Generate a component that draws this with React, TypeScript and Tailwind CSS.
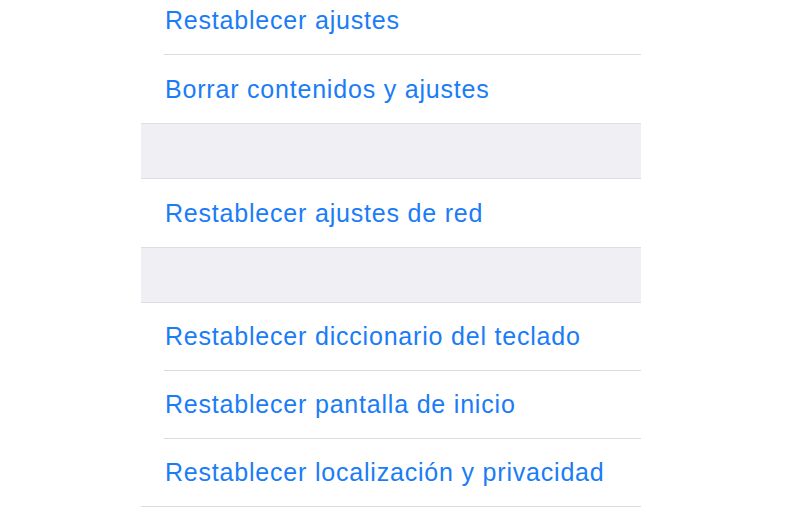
import React from 'react';

// ── Data ─────────────────────────────────────────────────────────────────────
const groups: string[][] = [
  ['Restablecer ajustes', 'Borrar contenidos y ajustes'],
  ['Restablecer ajustes de red'],
  [
    'Restablecer diccionario del teclado',
    'Restablecer pantalla de inicio',
    'Restablecer localización y privacidad',
  ],
];

// ── Row ──────────────────────────────────────────────────────────────────────
function Row({ label, last, closed }: { label: string; last: boolean; closed: boolean }) {
  return (
    <div className="flex h-[68px] flex-col">
      <div className="flex flex-1 items-center pl-6">
        <span className="text-[25px] tracking-[0.8px] text-[#1a7cf6] leading-none">{label}</span>
      </div>
      {!last && <div className="ml-[23px] h-px bg-[#dcdce0]" />}
      {last && closed && <div className="h-px bg-[#dcdce0]" />}
    </div>
  );
}

// ── Gray spacer band between groups ──────────────────────────────────────────
function Band() {
  return <div className="h-[56px] border-y border-[#dedee3] bg-[#efeff4]" />;
}

export default function App() {
  return (
    <div
      className="h-[509px] w-full overflow-hidden bg-white"
      style={{ fontFamily: '"Liberation Sans", Arial, sans-serif' }}
    >
      <div className="-mt-[13px] ml-[141px] w-[500px]">
        {groups.map((rows, gi) => (
          <React.Fragment key={gi}>
            {gi > 0 && <Band />}
            {rows.map((label, ri) => (
              <Row
                key={label}
                label={label}
                last={ri === rows.length - 1}
                closed={gi === groups.length - 1}
              />
            ))}
          </React.Fragment>
        ))}
      </div>
    </div>
  );
}
